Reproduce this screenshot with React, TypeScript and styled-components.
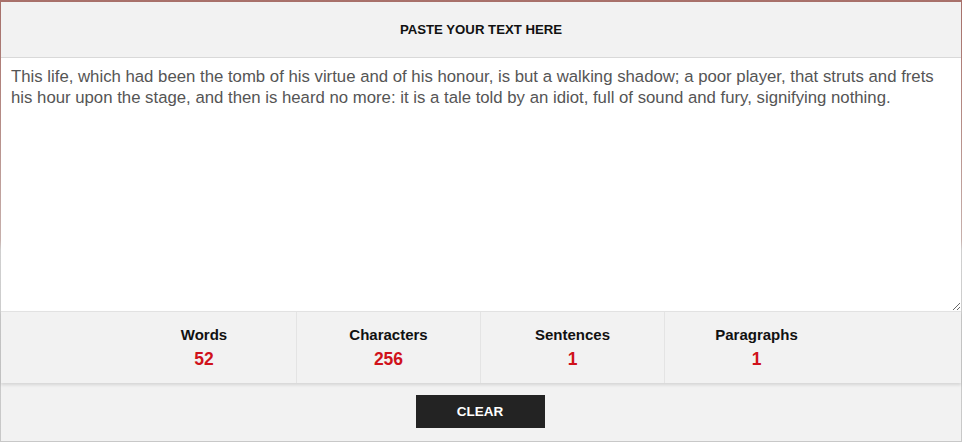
import styled, { createGlobalStyle } from "styled-components";
import { useState } from "react";

const GlobalStyle = createGlobalStyle`
    html, body {
        margin: 0;
        padding: 0;
        background: #ffffff;
        font-family: "Liberation Sans", Arial, sans-serif;
    }
`;

const Frame = styled.div`
    width: 962px;
    height: 442px;
    box-sizing: border-box;
    padding: 2px 1px 1px 1px;
    background: linear-gradient(to bottom, #a9716b 0px, #b58c86 120px, #c7b0ac 240px, #cfcfcf 250px, #c8c8c8 100%);
`;

const Panel = styled.div`
    height: 100%;
    display: flex;
    flex-direction: column;
    background: #f2f2f2;
`;

const Header = styled.div`
    height: 55px;
    display: flex;
    align-items: center;
    justify-content: center;
    font-size: 13.2px;
    font-weight: bold;
    color: #111;
    border-bottom: 1px solid #d9d9d9;
    box-shadow: 0 1px 2px rgba(0, 0, 0, 0.06);
`;

const TextBox = styled.textarea`
    display: block;
    height: 253px;
    margin: 0;
    box-sizing: border-box;
    border: none;
    outline: none;
    resize: vertical;
    padding: 8px 10px;
    font-family: "Liberation Sans", Arial, sans-serif;
    font-size: 16.75px;
    line-height: 21px;
    color: #555;
    background: #fff;
`;

const Stats = styled.div`
    height: 71px;
    display: flex;
    justify-content: center;
    padding-right: 2px;
    border-top: 1px solid #e2e2e2;
    box-shadow: 0 2px 3px rgba(0, 0, 0, 0.12);
    position: relative;
`;

const Stat = styled.div<{ $first?: boolean }>`
    width: 184px;
    display: flex;
    flex-direction: column;
    align-items: center;
    padding-top: 14px;
    box-sizing: border-box;
    border-left: ${(p) => (p.$first ? "none" : "1px solid #e4e4e4")};
`;

const Label = styled.div`
    font-size: 15px;
    font-weight: bold;
    color: #111;
    line-height: 18px;
`;

const Value = styled.div`
    font-size: 17.5px;
    font-weight: bold;
    color: #d0121b;
    line-height: 20px;
    margin-top: 5px;
`;

const Footer = styled.div`
    flex: 1;
    display: flex;
    justify-content: center;
    padding-top: 12px;
    padding-right: 2px;
`;

const ClearButton = styled.button`
    width: 129px;
    height: 33px;
    border: none;
    background: #232323;
    color: #fff;
    font-family: "Liberation Sans", Arial, sans-serif;
    font-size: 13.5px;
    font-weight: bold;
    cursor: pointer;
`;

const initialText =
    "This life, which had been the tomb of his virtue and of his honour, is but a walking shadow; a poor player, that struts and frets his hour upon the stage, and then is heard no more: it is a tale told by an idiot, full of sound and fury, signifying nothing.";

function count(text: string) {
    const trimmed = text.trim();
    return {
        words: trimmed ? trimmed.split(/\s+/).length : 0,
        characters: text.length,
        sentences: trimmed ? (trimmed.match(/[^.!?]+[.!?]+/g) || [trimmed]).length : 0,
        paragraphs: trimmed ? trimmed.split(/\n+/).filter((p) => p.trim()).length : 0,
    };
}

export default function App() {
    const [text, setText] = useState(initialText);
    const c = count(text);
    const stats = [
        { label: "Words", value: c.words },
        { label: "Characters", value: c.characters },
        { label: "Sentences", value: c.sentences },
        { label: "Paragraphs", value: c.paragraphs },
    ];

    return (
        <>
            <GlobalStyle />
            <Frame>
                <Panel>
                    <Header>PASTE YOUR TEXT HERE</Header>
                    <TextBox value={text} onChange={(e) => setText(e.target.value)} spellCheck={false} />
                    <Stats>
                        {stats.map((s, i) => (
                            <Stat key={s.label} $first={i === 0}>
                                <Label>{s.label}</Label>
                                <Value>{s.value}</Value>
                            </Stat>
                        ))}
                    </Stats>
                    <Footer>
                        <ClearButton onClick={() => setText("")}>CLEAR</ClearButton>
                    </Footer>
                </Panel>
            </Frame>
        </>
    );
}
